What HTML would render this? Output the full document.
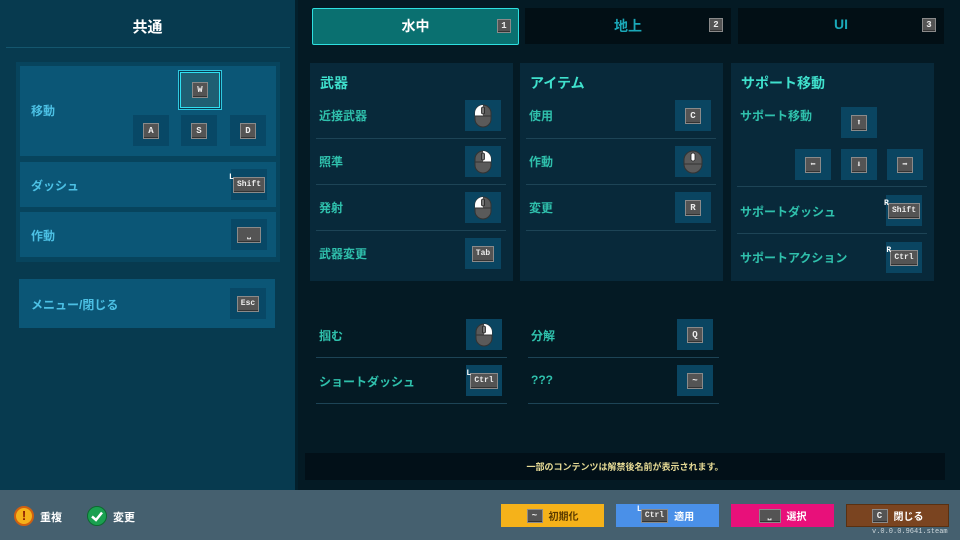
<!DOCTYPE html>
<html><head><meta charset="utf-8">
<style>
*{margin:0;padding:0;box-sizing:border-box}
body{width:960px;height:540px;overflow:hidden;background:#041a24;font-family:"Liberation Sans","Noto Sans CJK JP",sans-serif;position:relative}
.a{position:absolute}
.lbl{position:absolute;font-size:12px;font-weight:bold;color:#2fc0ac}
.ll{position:absolute;font-size:12px;font-weight:bold;color:#4cc0e4}
.kb{position:absolute;width:36px;height:31px;background:#0a4561;display:flex;align-items:center;justify-content:center}
.lk{background:#084866}
.k{background:#545454;border:1px solid #8a8a8a;color:#eee;font-size:9px;font-weight:bold;height:16px;min-width:16px;padding:0 3px;display:flex;align-items:center;justify-content:center;box-shadow:inset 0 -1px 0 #333;font-family:"Liberation Mono",monospace}
.sep{position:absolute;height:1px;background:#1d4456}
.box{position:absolute;background:#08293a}
.h{position:absolute;font-size:14px;font-weight:bold;color:#3fe0cc}
.btn{position:absolute;top:504px;width:103px;height:23px;display:flex;align-items:center;justify-content:center;font-size:10px;font-weight:bold;gap:6px}
.mod{position:relative}
.mod:before{content:"L";position:absolute;left:-5px;top:-5px;font-size:8px;color:#fff;font-weight:bold}
.modr:before{content:"R"}
</style></head><body>
<div class="a" style="left:0;top:0;width:295px;height:490px;background:#073a4f"></div>
<div class="a" style="left:295px;top:0;width:3px;height:490px;background:#03202c"></div>
<div class="a" style="left:0;top:16px;width:295px;text-align:center;font-size:15px;font-weight:bold;color:#fff">共通</div>
<div class="a" style="left:6px;top:47px;width:284px;height:1px;background:#14566e"></div>
<div class="a" style="left:16px;top:62px;width:264px;height:200px;background:#07445d"></div>
<div class="a" style="left:20px;top:66px;width:256px;height:90px;background:#0b5676"></div>
<div class="a" style="left:20px;top:162px;width:256px;height:45px;background:#0b5676"></div>
<div class="a" style="left:20px;top:212px;width:256px;height:45px;background:#0b5676"></div>
<div class="a" style="left:19px;top:279px;width:256px;height:49px;background:#0b5676"></div>
<div class="ll" style="left:31px;top:102px">移動</div>
<div class="ll" style="left:31px;top:177px">ダッシュ</div>
<div class="ll" style="left:31px;top:227px">作動</div>
<div class="ll" style="left:31px;top:296px">メニュー/閉じる</div>
<div class="kb" style="left:180px;top:72px;width:40px;height:36px;background:#1f5f72;border:1px solid #2fe0f0;box-shadow:0 0 0 1px #073a4f,0 0 0 2px #2fc8e0;"><div class="k">W</div></div>
<div class="kb lk" style="left:133px;top:115px"><div class="k">A</div></div>
<div class="kb lk" style="left:181px;top:115px"><div class="k">S</div></div>
<div class="kb lk" style="left:230px;top:115px"><div class="k">D</div></div>
<div class="kb lk" style="left:231px;top:169px"><div class="k mod" style="font-size:8px">Shift</div></div>
<div class="kb lk" style="left:231px;top:219px"><div class="k" style="width:24px">⎵</div></div>
<div class="kb lk" style="left:230px;top:288px"><div class="k" style="font-size:8px">Esc</div></div>

<div class="a" style="left:312px;top:8px;width:207px;height:37px;background:#0a7070;border:1px solid #2ee0e0;border-radius:2px"></div>
<div class="a" style="left:312px;top:16px;width:207px;text-align:center;font-size:14px;font-weight:bold;color:#fff">水中</div>
<div class="a" style="left:497px;top:19px"><div class="k" style="height:14px;min-width:14px">1</div></div>
<div class="a" style="left:525px;top:8px;width:206px;height:36px;background:#020f15"></div>
<div class="a" style="left:525px;top:16px;width:206px;text-align:center;font-size:14px;font-weight:bold;color:#1aa8b8">地上</div>
<div class="a" style="left:709px;top:18px"><div class="k" style="height:14px;min-width:14px">2</div></div>
<div class="a" style="left:738px;top:8px;width:206px;height:36px;background:#020f15"></div>
<div class="a" style="left:738px;top:16px;width:206px;text-align:center;font-size:14px;font-weight:bold;color:#1aa8b8">UI</div>
<div class="a" style="left:922px;top:18px"><div class="k" style="height:14px;min-width:14px">3</div></div>

<div class="box" style="left:310px;top:63px;width:203px;height:218px"></div>
<div class="box" style="left:520px;top:63px;width:203px;height:218px"></div>
<div class="box" style="left:731px;top:63px;width:203px;height:218px"></div>
<div class="h" style="left:320px;top:73px">武器</div>
<div class="h" style="left:530px;top:73px">アイテム</div>
<div class="h" style="left:741px;top:73px">サポート移動</div>

<div class="lbl" style="left:319px;top:107px">近接武器</div>
<div class="lbl" style="left:319px;top:153px">照準</div>
<div class="lbl" style="left:319px;top:199px">発射</div>
<div class="lbl" style="left:319px;top:245px">武器変更</div>
<div class="sep" style="left:316px;top:138px;width:190px"></div>
<div class="sep" style="left:316px;top:184px;width:190px"></div>
<div class="sep" style="left:316px;top:230px;width:190px"></div>

<svg width="0" height="0" style="position:absolute"><defs>
<g id="mL"><rect x="1" y="1" width="16" height="22" rx="8" fill="#5a5a5a" stroke="#333"/><path d="M9 1 A8 8 0 0 0 1 9 L1 12 L9 12 Z" fill="#fff"/><line x1="1" y1="12" x2="17" y2="12" stroke="#333"/><rect x="7.5" y="3" width="3" height="7" rx="1.5" fill="#777" stroke="#222" stroke-width=".8"/></g>
<g id="mR"><rect x="1" y="1" width="16" height="22" rx="8" fill="#5a5a5a" stroke="#333"/><path d="M9 1 A8 8 0 0 1 17 9 L17 12 L9 12 Z" fill="#fff"/><line x1="1" y1="12" x2="17" y2="12" stroke="#333"/><rect x="7.5" y="3" width="3" height="7" rx="1.5" fill="#777" stroke="#222" stroke-width=".8"/></g>
</defs></svg>
<div class="kb" style="left:465px;top:100px"><svg width="18" height="24"><use href="#mL"/></svg></div>
<div class="kb" style="left:465px;top:146px"><svg width="18" height="24"><use href="#mR"/></svg></div>
<div class="kb" style="left:465px;top:192px"><svg width="18" height="24"><use href="#mL"/></svg></div>
<div class="kb" style="left:465px;top:238px"><div class="k" style="font-size:8px">Tab</div></div>

<div class="lbl" style="left:529px;top:107px">使用</div>
<div class="lbl" style="left:529px;top:153px">作動</div>
<div class="lbl" style="left:529px;top:199px">変更</div>
<div class="sep" style="left:526px;top:138px;width:190px"></div>
<div class="sep" style="left:526px;top:184px;width:190px"></div>
<div class="sep" style="left:526px;top:230px;width:190px"></div>
<div class="kb" style="left:675px;top:100px"><div class="k">C</div></div>
<div class="kb" style="left:675px;top:146px"><svg width="20" height="24"><rect x="1" y="1" width="18" height="22" rx="9" fill="#5a5a5a" stroke="#333"/><line x1="1" y1="14" x2="19" y2="14" stroke="#333"/><rect x="8" y="3" width="4" height="8" rx="2" fill="#fff" stroke="#222" stroke-width=".8"/></svg></div>
<div class="kb" style="left:675px;top:192px"><div class="k">R</div></div>

<div class="lbl" style="left:740px;top:107px">サポート移動</div>
<div class="kb" style="left:841px;top:107px"><div class="k">⬆</div></div>
<div class="kb" style="left:795px;top:149px"><div class="k">⬅</div></div>
<div class="kb" style="left:841px;top:149px"><div class="k">⬇</div></div>
<div class="kb" style="left:887px;top:149px"><div class="k">➡</div></div>
<div class="sep" style="left:737px;top:186px;width:190px"></div>
<div class="lbl" style="left:740px;top:203px">サポートダッシュ</div>
<div class="kb" style="left:886px;top:195px"><div class="k mod modr" style="font-size:8px">Shift</div></div>
<div class="sep" style="left:737px;top:233px;width:190px"></div>
<div class="lbl" style="left:740px;top:249px">サポートアクション</div>
<div class="kb" style="left:886px;top:242px"><div class="k mod modr" style="font-size:8px">Ctrl</div></div>

<div class="lbl" style="left:319px;top:327px">掴む</div>
<div class="lbl" style="left:319px;top:373px">ショートダッシュ</div>
<div class="sep" style="left:316px;top:357px;width:191px"></div>
<div class="sep" style="left:316px;top:403px;width:191px"></div>
<div class="kb" style="left:466px;top:319px"><svg width="18" height="24"><use href="#mR"/></svg></div>
<div class="kb" style="left:466px;top:365px"><div class="k mod" style="font-size:8px">Ctrl</div></div>
<div class="lbl" style="left:531px;top:327px">分解</div>
<div class="lbl" style="left:531px;top:373px">???</div>
<div class="sep" style="left:528px;top:357px;width:191px"></div>
<div class="sep" style="left:528px;top:403px;width:191px"></div>
<div class="kb" style="left:677px;top:319px"><div class="k">Q</div></div>
<div class="kb" style="left:677px;top:365px"><div class="k">~</div></div>

<div class="a" style="left:305px;top:453px;width:640px;height:27px;background:#021018"></div>
<div class="a" style="left:305px;top:460px;width:640px;text-align:center;font-size:9px;font-weight:bold;color:#e8dc96">一部のコンテンツは解禁後名前が表示されます。</div>

<div class="a" style="left:0;top:490px;width:960px;height:50px;background:#45606f"></div>
<div class="a" style="left:14px;top:506px;width:20px;height:20px;border-radius:50%;background:#f5b21a;border:2px solid #d06010;color:#8a1a00;font-size:13px;font-weight:bold;text-align:center;line-height:16px">!</div>
<div class="a" style="left:40px;top:509px;font-size:11px;font-weight:bold;color:#fff">重複</div>
<div class="a" style="left:87px;top:506px;width:20px;height:20px;border-radius:50%;background:#1aa050;border:1px solid #0c6a30"><svg width="18" height="18"><path d="M4 9.5 L8 13 L14 5.5" stroke="#fff" stroke-width="2.5" fill="none"/></svg></div>
<div class="a" style="left:113px;top:509px;font-size:11px;font-weight:bold;color:#fff">変更</div>

<div class="btn" style="left:501px;background:#f5b21a;color:#5a3a00"><div class="k" style="height:14px">~</div>初期化</div>
<div class="btn" style="left:616px;background:#4a90e8;color:#fff"><div class="k mod" style="height:14px;font-size:8px">Ctrl</div>適用</div>
<div class="btn" style="left:731px;background:#e8107a;color:#fff"><div class="k" style="height:14px;width:22px">⎵</div>選択</div>
<div class="btn" style="left:846px;background:#7a4420;color:#fff;border:1px solid #5a3010"><div class="k" style="height:14px">C</div>閉じる</div>
<div class="a" style="left:872px;top:528px;font-size:7px;color:#cfd8dc;font-family:'Liberation Mono',monospace">v.0.0.0.9641.steam</div>
</body></html>
